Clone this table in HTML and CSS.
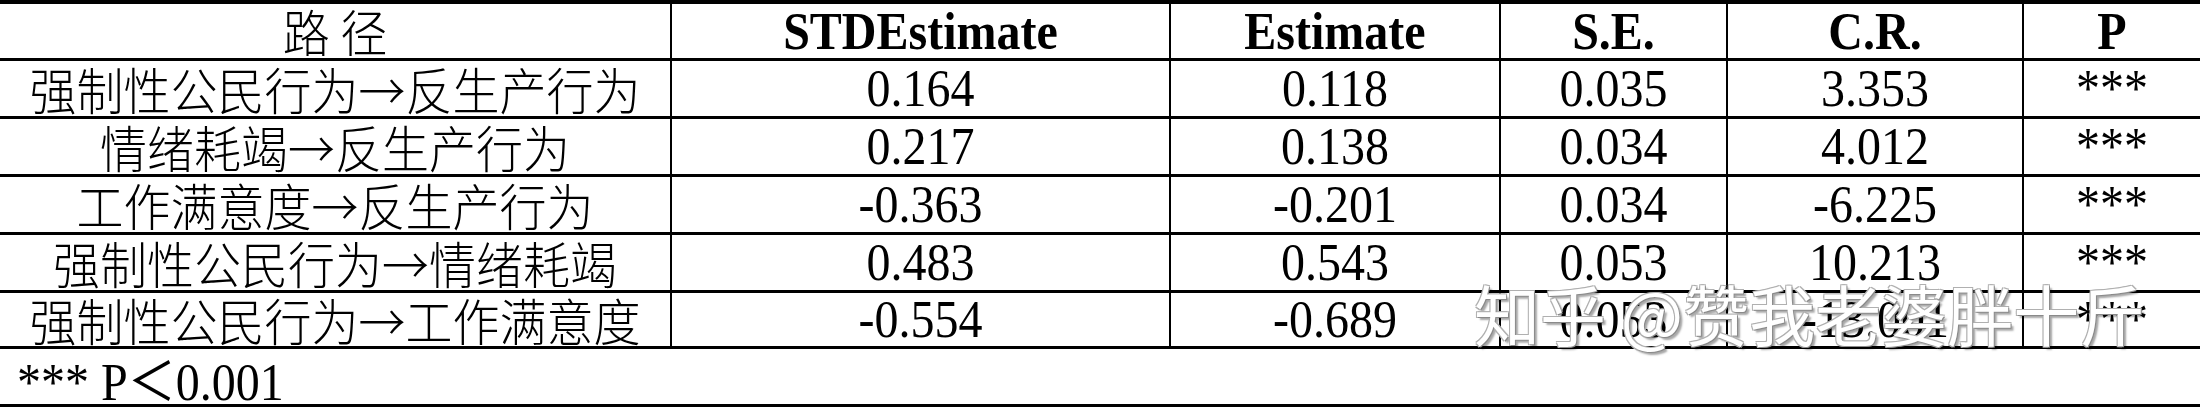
FILE: index.html
```html
<!DOCTYPE html>
<html lang="zh-CN">
<head>
    <meta charset="UTF-8">
    <meta name="viewport" content="width=device-width, initial-scale=1.0">
    <title>路径系数</title>
    <link rel="stylesheet" href="styles.css">
</head>
<body>

<div class="sheet">
    <table class="paths">
        <colgroup>
            <col class="c-path">
            <col class="c-std">
            <col class="c-est">
            <col class="c-se">
            <col class="c-cr">
            <col class="c-p">
        </colgroup>
        <thead>
            <tr>
                <th class="cn"><span>路 径</span></th>
                <th><span>STDEstimate</span></th>
                <th><span>Estimate</span></th>
                <th><span>S.E.</span></th>
                <th><span>C.R.</span></th>
                <th><span>P</span></th>
            </tr>
        </thead>
        <tbody>
            <tr>
                <td class="cn"><span>强制性公民行为→反生产行为</span></td>
                <td><span>0.164</span></td>
                <td><span>0.118</span></td>
                <td><span>0.035</span></td>
                <td><span>3.353</span></td>
                <td><span>***</span></td>
            </tr>
            <tr>
                <td class="cn"><span>情绪耗竭→反生产行为</span></td>
                <td><span>0.217</span></td>
                <td><span>0.138</span></td>
                <td><span>0.034</span></td>
                <td><span>4.012</span></td>
                <td><span>***</span></td>
            </tr>
            <tr>
                <td class="cn"><span>工作满意度→反生产行为</span></td>
                <td><span>-0.363</span></td>
                <td><span>-0.201</span></td>
                <td><span>0.034</span></td>
                <td><span>-6.225</span></td>
                <td><span>***</span></td>
            </tr>
            <tr>
                <td class="cn"><span>强制性公民行为→情绪耗竭</span></td>
                <td><span>0.483</span></td>
                <td><span>0.543</span></td>
                <td><span>0.053</span></td>
                <td><span>10.213</span></td>
                <td><span>***</span></td>
            </tr>
            <tr class="last">
                <td class="cn"><span>强制性公民行为→工作满意度</span></td>
                <td><span>-0.554</span></td>
                <td><span>-0.689</span></td>
                <td><span>0.053</span></td>
                <td><span>-13.001</span></td>
                <td><span>***</span></td>
            </tr>
        </tbody>
    </table>

    <!-- Note under the table -->
    <p class="note"><span>*** P＜0.001</span></p>

    <!-- Site watermark over the last row -->
    <div class="watermark">知乎 @赞我老婆胖十斤</div>
</div>

</body>
</html>
```

FILE: styles.css
```css
body {
    margin: 0;
    padding: 0;
    background-color: #ffffff;
    color: #000000;
    font-family: "Liberation Serif", "Times New Roman", "Noto Sans CJK SC", serif;
}
.sheet {
    position: relative;
    width: 2200px;
    height: 408px;
    overflow: hidden;
}
.paths {
    width: 2200px;
    table-layout: fixed;
    border-collapse: separate;
    border-spacing: 0;
    border-top: 4px solid #000;
}
.c-path { width: 670px; }
.c-std { width: 499px; }
.c-est { width: 330px; }
.c-se { width: 227px; }
.c-cr { width: 296px; }
.c-p { width: 178px; }

.paths tr {
    height: 58px;
}
.paths thead tr {
    height: 57px;
}
.paths tr.last {
    height: 56px;
}
.paths th,
.paths td {
    padding: 0;
    text-align: center;
    vertical-align: middle;
    font-size: 48px;
    line-height: 1.1;
    white-space: nowrap;
    border-bottom: 3px solid #000;
}
.paths th + th,
.paths td + td {
    border-left: 2px solid #000;
}
.paths th {
    font-weight: bold;
}
/* the scan is a little stretched upright */
.paths span,
.note span {
    display: inline-block;
    transform: scaleY(1.1);
}
.paths .cn {
    font-family: "Noto Sans CJK SC", sans-serif;
    font-weight: 300;
    font-size: 47px;
}
.paths .cn span {
    transform: scaleY(1.06);
}
.note {
    margin: 0;
    height: 55px;
    padding-left: 17px;
    display: flex;
    align-items: center;
    font-size: 48px;
    border-bottom: 3px solid #000;
}
.watermark {
    position: absolute;
    left: 1474px;
    top: 279px;
    font-family: "Noto Sans CJK SC", sans-serif;
    font-size: 66px;
    line-height: 1;
    color: #ffffff;
    white-space: nowrap;
    text-shadow: 1px 1px 0 #8a8a8a, -1px -1px 0 #b0b0b0, 1px -1px 0 #b0b0b0, -1px 1px 0 #b0b0b0, 3px 3px 2px rgba(0, 0, 0, 0.35);
}
```
